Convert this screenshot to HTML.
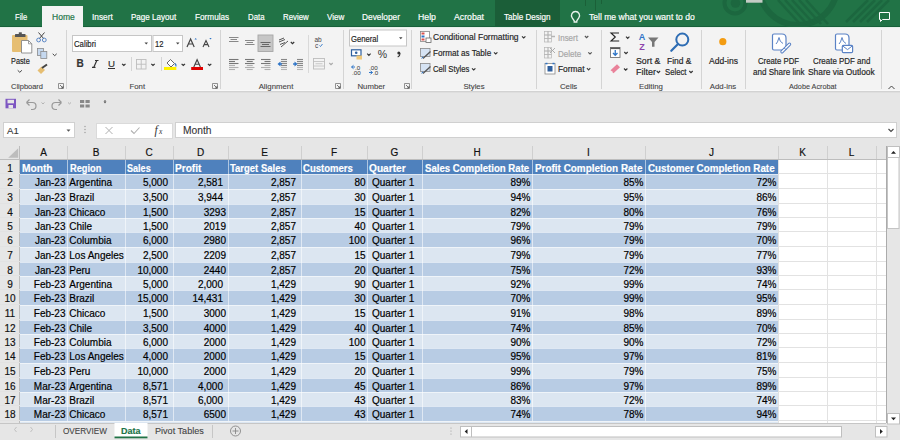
<!DOCTYPE html>
<html><head><meta charset="utf-8"><style>
html,body{margin:0;padding:0;width:900px;height:440px;overflow:hidden;background:#fff;}
body{position:relative;font-family:"Liberation Sans",sans-serif;}
div,span,svg{position:absolute;}
span{white-space:nowrap;-webkit-text-stroke:0.18px currentColor;}
</style></head><body>
<div style="left:0px;top:0px;width:900px;height:27px;background:#217346;"></div><div style="left:495px;top:0px;width:65px;height:27px;background:#1B5E38;"></div><div style="left:0px;top:26px;width:900px;height:1px;background:#17603A;"></div><div style="left:0px;top:27px;width:900px;height:1px;background:#E4F0E8;"></div><div style="left:42px;top:6px;width:41px;height:22px;background:#F3F3F3;"></div><div style="left:0px;top:28px;width:900px;height:63px;background:#F3F3F3;"></div><div style="left:0px;top:90px;width:900px;height:1px;background:#F8F8F8;"></div><div style="left:0px;top:91px;width:900px;height:1px;background:#D2D2D2;"></div><div style="left:66px;top:30px;width:1px;height:59px;background:#D4D4D4;"></div><div style="left:220px;top:30px;width:1px;height:59px;background:#D4D4D4;"></div><div style="left:343px;top:30px;width:1px;height:59px;background:#D4D4D4;"></div><div style="left:411px;top:30px;width:1px;height:59px;background:#D4D4D4;"></div><div style="left:536px;top:30px;width:1px;height:59px;background:#D4D4D4;"></div><div style="left:601px;top:30px;width:1px;height:59px;background:#D4D4D4;"></div><div style="left:701px;top:30px;width:1px;height:59px;background:#D4D4D4;"></div><div style="left:745px;top:30px;width:1px;height:59px;background:#D4D4D4;"></div><div style="left:881px;top:30px;width:1px;height:59px;background:#D4D4D4;"></div><div style="left:108px;top:68px;width:7px;height:1px;background:#333;"></div><div style="left:0px;top:92px;width:900px;height:54px;background:#E6E6E6;"></div><div style="left:0px;top:92px;width:900px;height:1px;background:#DEDEDE;"></div><div style="left:3px;top:122px;width:72px;height:16px;background:#FFFFFF;box-shadow:inset 0 0 0 1px #D0D0D0;"></div><div style="left:96px;top:122.5px;width:76.5px;height:16px;background:#FFFFFF;box-shadow:inset 0 0 0 1px #DADADA;"></div><div style="left:175px;top:122px;width:722px;height:16px;background:#FFFFFF;box-shadow:inset 0 0 0 1px #D0D0D0;"></div><div style="left:0px;top:146px;width:886px;height:14px;background:#E6E6E6;"></div><div style="left:0px;top:160px;width:886px;height:263px;background:#FFFFFF;"></div><div style="left:0px;top:160px;width:20px;height:263px;background:#E6E6E6;"></div><div style="left:19px;top:146px;width:1px;height:277px;background:#BDBDBD;"></div><div style="left:0px;top:159px;width:886px;height:1px;background:#BDBDBD;"></div><div style="left:67px;top:146px;width:1px;height:13px;background:#CFCFCF;"></div><div style="left:125px;top:146px;width:1px;height:13px;background:#CFCFCF;"></div><div style="left:173px;top:146px;width:1px;height:13px;background:#CFCFCF;"></div><div style="left:228px;top:146px;width:1px;height:13px;background:#CFCFCF;"></div><div style="left:301px;top:146px;width:1px;height:13px;background:#CFCFCF;"></div><div style="left:367px;top:146px;width:1px;height:13px;background:#CFCFCF;"></div><div style="left:422px;top:146px;width:1px;height:13px;background:#CFCFCF;"></div><div style="left:532px;top:146px;width:1px;height:13px;background:#CFCFCF;"></div><div style="left:645px;top:146px;width:1px;height:13px;background:#CFCFCF;"></div><div style="left:778px;top:146px;width:1px;height:13px;background:#CFCFCF;"></div><div style="left:827px;top:146px;width:1px;height:13px;background:#CFCFCF;"></div><div style="left:876px;top:146px;width:1px;height:13px;background:#CFCFCF;"></div><div style="left:0px;top:173px;width:886px;height:1px;background:#E2E2E2;"></div><div style="left:0px;top:188px;width:886px;height:1px;background:#E2E2E2;"></div><div style="left:0px;top:203px;width:886px;height:1px;background:#E2E2E2;"></div><div style="left:0px;top:217px;width:886px;height:1px;background:#E2E2E2;"></div><div style="left:0px;top:231px;width:886px;height:1px;background:#E2E2E2;"></div><div style="left:0px;top:246px;width:886px;height:1px;background:#E2E2E2;"></div><div style="left:0px;top:261px;width:886px;height:1px;background:#E2E2E2;"></div><div style="left:0px;top:275px;width:886px;height:1px;background:#E2E2E2;"></div><div style="left:0px;top:289px;width:886px;height:1px;background:#E2E2E2;"></div><div style="left:0px;top:304px;width:886px;height:1px;background:#E2E2E2;"></div><div style="left:0px;top:319px;width:886px;height:1px;background:#E2E2E2;"></div><div style="left:0px;top:333px;width:886px;height:1px;background:#E2E2E2;"></div><div style="left:0px;top:347px;width:886px;height:1px;background:#E2E2E2;"></div><div style="left:0px;top:362px;width:886px;height:1px;background:#E2E2E2;"></div><div style="left:0px;top:377px;width:886px;height:1px;background:#E2E2E2;"></div><div style="left:0px;top:391px;width:886px;height:1px;background:#E2E2E2;"></div><div style="left:0px;top:405px;width:886px;height:1px;background:#E2E2E2;"></div><div style="left:0px;top:420px;width:886px;height:1px;background:#E2E2E2;"></div><div style="left:0px;top:435px;width:886px;height:1px;background:#E2E2E2;"></div><div style="left:778px;top:160px;width:1px;height:263px;background:#E2E2E2;"></div><div style="left:827px;top:160px;width:1px;height:263px;background:#E2E2E2;"></div><div style="left:876px;top:160px;width:1px;height:263px;background:#E2E2E2;"></div><div style="left:886px;top:160px;width:1px;height:263px;background:#E2E2E2;"></div><div style="left:20px;top:160px;width:758px;height:14px;background:#4F81BD;"></div><div style="left:20px;top:174px;width:758px;height:15px;background:#B8CCE4;"></div><div style="left:20px;top:189px;width:758px;height:15px;background:#DCE6F1;"></div><div style="left:20px;top:204px;width:758px;height:14px;background:#B8CCE4;"></div><div style="left:20px;top:218px;width:758px;height:14px;background:#DCE6F1;"></div><div style="left:20px;top:232px;width:758px;height:15px;background:#B8CCE4;"></div><div style="left:20px;top:247px;width:758px;height:15px;background:#DCE6F1;"></div><div style="left:20px;top:262px;width:758px;height:14px;background:#B8CCE4;"></div><div style="left:20px;top:276px;width:758px;height:14px;background:#DCE6F1;"></div><div style="left:20px;top:290px;width:758px;height:15px;background:#B8CCE4;"></div><div style="left:20px;top:305px;width:758px;height:15px;background:#DCE6F1;"></div><div style="left:20px;top:320px;width:758px;height:14px;background:#B8CCE4;"></div><div style="left:20px;top:334px;width:758px;height:14px;background:#DCE6F1;"></div><div style="left:20px;top:348px;width:758px;height:15px;background:#B8CCE4;"></div><div style="left:20px;top:363px;width:758px;height:15px;background:#DCE6F1;"></div><div style="left:20px;top:378px;width:758px;height:14px;background:#B8CCE4;"></div><div style="left:20px;top:392px;width:758px;height:14px;background:#DCE6F1;"></div><div style="left:20px;top:406px;width:758px;height:15px;background:#B8CCE4;"></div><div style="left:20px;top:174px;width:758px;height:1px;background:rgba(255,255,255,0.55);"></div><div style="left:20px;top:189px;width:758px;height:1px;background:rgba(255,255,255,0.55);"></div><div style="left:20px;top:204px;width:758px;height:1px;background:rgba(255,255,255,0.55);"></div><div style="left:20px;top:218px;width:758px;height:1px;background:rgba(255,255,255,0.55);"></div><div style="left:20px;top:232px;width:758px;height:1px;background:rgba(255,255,255,0.55);"></div><div style="left:20px;top:247px;width:758px;height:1px;background:rgba(255,255,255,0.55);"></div><div style="left:20px;top:262px;width:758px;height:1px;background:rgba(255,255,255,0.55);"></div><div style="left:20px;top:276px;width:758px;height:1px;background:rgba(255,255,255,0.55);"></div><div style="left:20px;top:290px;width:758px;height:1px;background:rgba(255,255,255,0.55);"></div><div style="left:20px;top:305px;width:758px;height:1px;background:rgba(255,255,255,0.55);"></div><div style="left:20px;top:320px;width:758px;height:1px;background:rgba(255,255,255,0.55);"></div><div style="left:20px;top:334px;width:758px;height:1px;background:rgba(255,255,255,0.55);"></div><div style="left:20px;top:348px;width:758px;height:1px;background:rgba(255,255,255,0.55);"></div><div style="left:20px;top:363px;width:758px;height:1px;background:rgba(255,255,255,0.55);"></div><div style="left:20px;top:378px;width:758px;height:1px;background:rgba(255,255,255,0.55);"></div><div style="left:20px;top:392px;width:758px;height:1px;background:rgba(255,255,255,0.55);"></div><div style="left:20px;top:406px;width:758px;height:1px;background:rgba(255,255,255,0.55);"></div><div style="left:67px;top:160px;width:1px;height:261px;background:rgba(255,255,255,0.55);"></div><div style="left:125px;top:160px;width:1px;height:261px;background:rgba(255,255,255,0.55);"></div><div style="left:173px;top:160px;width:1px;height:261px;background:rgba(255,255,255,0.55);"></div><div style="left:228px;top:160px;width:1px;height:261px;background:rgba(255,255,255,0.55);"></div><div style="left:301px;top:160px;width:1px;height:261px;background:rgba(255,255,255,0.55);"></div><div style="left:367px;top:160px;width:1px;height:261px;background:rgba(255,255,255,0.55);"></div><div style="left:422px;top:160px;width:1px;height:261px;background:rgba(255,255,255,0.55);"></div><div style="left:532px;top:160px;width:1px;height:261px;background:rgba(255,255,255,0.55);"></div><div style="left:645px;top:160px;width:1px;height:261px;background:rgba(255,255,255,0.55);"></div><div style="left:20px;top:421px;width:758px;height:2px;background:#DCE6F1;"></div><div style="left:20px;top:421px;width:758px;height:1px;background:rgba(255,255,255,0.55);"></div><div style="left:886px;top:146px;width:14px;height:279px;background:#E6E6E6;"></div><div style="left:886px;top:146px;width:1px;height:278px;background:#ABABAB;"></div><div style="left:0px;top:423px;width:900px;height:17px;background:#E6E6E6;"></div><div style="left:0px;top:423px;width:886px;height:1px;background:#C6C6C6;"></div>
<svg width="900" height="440" style="left:0;top:0" viewBox="0 0 900 440"><clipPath id="gc"><rect x="0" y="0" width="900" height="27"/></clipPath><g clip-path="url(#gc)"><circle cx="735" cy="3" r="10.5" fill="none" stroke="#1C673F" stroke-width="4"/><circle cx="735.5" cy="3" r="4.8" fill="#1C673F"/><circle cx="798" cy="-14" r="39" fill="none" stroke="#1C673F" stroke-width="6"/><line x1="778" y1="0" x2="800" y2="24" stroke="#1C673F" stroke-width="2.5"/><line x1="785" y1="0" x2="807" y2="24" stroke="#1C673F" stroke-width="2.5"/><line x1="792" y1="0" x2="814" y2="24" stroke="#1C673F" stroke-width="2.5"/><line x1="799" y1="0" x2="821" y2="24" stroke="#1C673F" stroke-width="2.5"/><line x1="806" y1="0" x2="828" y2="24" stroke="#1C673F" stroke-width="2.5"/><line x1="868" y1="0" x2="846" y2="22" stroke="#1C673F" stroke-width="2.5"/><line x1="875" y1="0" x2="853" y2="22" stroke="#1C673F" stroke-width="2.5"/><line x1="882" y1="0" x2="860" y2="22" stroke="#1C673F" stroke-width="2.5"/><line x1="889" y1="0" x2="867" y2="22" stroke="#1C673F" stroke-width="2.5"/></g><rect x="746" y="0" width="16.5" height="2.7" fill="#C5CCC5"/><path d="M575.5 11.5 a4 4 0 0 1 3.3 6.3 l-2 3 v1.2 h-2.6 v-1.2 l-2 -3 a4 4 0 0 1 3.3 -6.3z" fill="none" stroke="#E8F3EC" stroke-width="1.3"/><g stroke="#1B6038" stroke-width="1"><line x1="585.5" y1="0" x2="585.5" y2="6"/><line x1="595.5" y1="0" x2="595.5" y2="11"/><line x1="601.5" y1="0" x2="601.5" y2="4"/></g><path d="M879.5 12.5 h10 v7 h-7 l-2 2 v-2 h-1 z" fill="none" stroke="#fff" stroke-width="1"/><rect x="12" y="35" width="15.5" height="17" rx="1" fill="#E6BE72"/><rect x="15" y="34" width="10.5" height="3" rx="0.5" fill="#555"/><rect x="18.8" y="32.3" width="3" height="2.5" fill="#555"/><path d="M21.5 40.5 h7 l3.3 3.3 v9.2 h-10.3 z" fill="#fff" stroke="#888" stroke-width="0.9"/><path d="M28.5 40.5 v3.3 h3.3" fill="none" stroke="#888" stroke-width="0.8"/><path d="M17.7 70.3 l2.1 2 l2.1 -2" fill="none" stroke="#444" stroke-width="1"/><line x1="38.5" y1="32.5" x2="44" y2="39" stroke="#444" stroke-width="1"/><line x1="44.5" y1="32.5" x2="39" y2="39" stroke="#444" stroke-width="1"/><circle cx="38.6" cy="40" r="1.9" fill="none" stroke="#5B87C6" stroke-width="1"/><circle cx="44.3" cy="40" r="1.9" fill="none" stroke="#5B87C6" stroke-width="1"/><rect x="37.5" y="48.5" width="6" height="7" fill="#C5D8EF" stroke="#8A8A8A" stroke-width="0.8"/><rect x="40.8" y="51.5" width="6" height="7" fill="#C5D8EF" stroke="#8A8A8A" stroke-width="0.8"/><path d="M52.7 53.8 l2 1.9 l2 -1.9" fill="none" stroke="#444" stroke-width="1"/><path d="M37.5 70.5 l4 -4 l3.5 3.5 l-4 4 z" fill="#E6BE72"/><line x1="42" y1="68" x2="47" y2="64.5" stroke="#444" stroke-width="2"/><path d="M58.5 83.5 h5 v5 h-5 z" fill="none" stroke="#777" stroke-width="0.8"/><path d="M60.0 85.0 l3 3 m-2 0 h2 v-2" fill="none" stroke="#555" stroke-width="0.8"/><path d="M212.5 83.5 h5 v5 h-5 z" fill="none" stroke="#777" stroke-width="0.8"/><path d="M214.0 85.0 l3 3 m-2 0 h2 v-2" fill="none" stroke="#555" stroke-width="0.8"/><path d="M335.5 83.5 h5 v5 h-5 z" fill="none" stroke="#777" stroke-width="0.8"/><path d="M337.0 85.0 l3 3 m-2 0 h2 v-2" fill="none" stroke="#555" stroke-width="0.8"/><path d="M404.5 83.5 h5 v5 h-5 z" fill="none" stroke="#777" stroke-width="0.8"/><path d="M406.0 85.0 l3 3 m-2 0 h2 v-2" fill="none" stroke="#555" stroke-width="0.8"/><rect x="72.5" y="35.5" width="79" height="16" fill="#fff" stroke="#C6C6C6"/><rect x="153" y="35.5" width="29.5" height="16" fill="#fff" stroke="#C6C6C6"/><path d="M144.5 42.5 h3.5 l-1.75 2 z" fill="#444"/><path d="M176 42.5 h3.5 l-1.75 2 z" fill="#444"/><path d="M187 47 l3.6 -8 l3.6 8 M188.5 44 h4.2" fill="none" stroke="#444" stroke-width="1.2"/><path d="M194.5 39.5 l1.2 -1.4 l1.2 1.4z" fill="#2E75C7"/><path d="M203 47 l3 -6.5 l3 6.5 M204.3 44.6 h3.4" fill="none" stroke="#444" stroke-width="1.1"/><path d="M209.3 38 l1.2 1.4 l1.2 -1.4z" fill="#2E75C7"/><rect x="136.5" y="59.5" width="9.5" height="9.5" fill="none" stroke="#BDBDBD" stroke-width="0.9"/><line x1="141.25" y1="59.5" x2="141.25" y2="69" stroke="#BDBDBD" stroke-width="0.9"/><line x1="136.5" y1="64.25" x2="146" y2="64.25" stroke="#BDBDBD" stroke-width="0.9"/><path d="M122.1 63.8 l1.7 1.7 l1.7 -1.7" fill="none" stroke="#333" stroke-width="1.15"/><path d="M151.3 63.8 l1.7 1.7 l1.7 -1.7" fill="none" stroke="#333" stroke-width="1.15"/><path d="M181.60000000000002 63.8 l1.7 1.7 l1.7 -1.7" fill="none" stroke="#333" stroke-width="1.15"/><path d="M207.9 63.8 l1.7 1.7 l1.7 -1.7" fill="none" stroke="#333" stroke-width="1.15"/><line x1="131.5" y1="57" x2="131.5" y2="71" stroke="#D4D4D4"/><line x1="161.5" y1="57" x2="161.5" y2="71" stroke="#D4D4D4"/><path d="M170.5 59.5 l4 4 l-3.5 3.5 l-4 -4 z" fill="#fff" stroke="#555" stroke-width="0.9"/><path d="M175 63.5 q1.5 1.5 0.8 3" fill="none" stroke="#2E75C7" stroke-width="1.2"/><rect x="164" y="67" width="12.3" height="3" fill="#FFF200"/><path d="M193.8 67 l3.3 -7.3 l3.3 7.3 M195.1 64.3 h4" fill="none" stroke="#444" stroke-width="1.1"/><rect x="191.2" y="67" width="11.8" height="3" fill="#E00000"/><path d="M95 60.5 h3.5 M92 67.3 h3.5 M96.8 60.5 l-3 6.8" fill="none" stroke="#333" stroke-width="1.2"/><line x1="229" y1="37.5" x2="238.5" y2="37.5" stroke="#888" stroke-width="1"/><line x1="230.5" y1="39.5" x2="237.0" y2="39.5" stroke="#888" stroke-width="1"/><line x1="229" y1="41.5" x2="238.5" y2="41.5" stroke="#888" stroke-width="1"/><line x1="245" y1="40.5" x2="254.5" y2="40.5" stroke="#888" stroke-width="1"/><line x1="246.5" y1="42.5" x2="253.0" y2="42.5" stroke="#888" stroke-width="1"/><line x1="245" y1="44.5" x2="254.5" y2="44.5" stroke="#888" stroke-width="1"/><rect x="258" y="35" width="15" height="16.5" fill="#C6C6C6" stroke="#A6A6A6" stroke-width="0.9"/><line x1="260.5" y1="42.5" x2="270.5" y2="42.5" stroke="#666" stroke-width="1"/><line x1="262" y1="44.5" x2="269" y2="44.5" stroke="#666" stroke-width="1"/><line x1="260.5" y1="46.5" x2="270.5" y2="46.5" stroke="#666" stroke-width="1"/><path d="M279 40 l5 -2 m-5 4 l6 -2.5 m-5 5 l5 -2" fill="none" stroke="#555" stroke-width="1"/><line x1="281" y1="47" x2="288" y2="41" stroke="#555" stroke-width="1"/><path d="M290.8 42 l1.7 1.7 l1.7 -1.7" fill="none" stroke="#333" stroke-width="1.15"/><line x1="229" y1="59.5" x2="238.5" y2="59.5" stroke="#777" stroke-width="1.1"/><line x1="229" y1="61.5" x2="235" y2="61.5" stroke="#777" stroke-width="1.1"/><line x1="229" y1="63.5" x2="238.5" y2="63.5" stroke="#777" stroke-width="1.1"/><line x1="229" y1="65.5" x2="235" y2="65.5" stroke="#B0B0B0" stroke-width="1.1"/><line x1="229" y1="67.5" x2="238.5" y2="67.5" stroke="#B0B0B0" stroke-width="1.1"/><line x1="229" y1="69.5" x2="235" y2="69.5" stroke="#B0B0B0" stroke-width="1.1"/><line x1="245.0" y1="59.5" x2="254.5" y2="59.5" stroke="#777" stroke-width="1.1"/><line x1="246.75" y1="61.5" x2="252.75" y2="61.5" stroke="#777" stroke-width="1.1"/><line x1="245.0" y1="63.5" x2="254.5" y2="63.5" stroke="#777" stroke-width="1.1"/><line x1="246.75" y1="65.5" x2="252.75" y2="65.5" stroke="#B0B0B0" stroke-width="1.1"/><line x1="245.0" y1="67.5" x2="254.5" y2="67.5" stroke="#B0B0B0" stroke-width="1.1"/><line x1="246.75" y1="69.5" x2="252.75" y2="69.5" stroke="#B0B0B0" stroke-width="1.1"/><line x1="261.0" y1="59.5" x2="270.5" y2="59.5" stroke="#777" stroke-width="1.1"/><line x1="264.5" y1="61.5" x2="270.5" y2="61.5" stroke="#777" stroke-width="1.1"/><line x1="261.0" y1="63.5" x2="270.5" y2="63.5" stroke="#777" stroke-width="1.1"/><line x1="264.5" y1="65.5" x2="270.5" y2="65.5" stroke="#B0B0B0" stroke-width="1.1"/><line x1="261.0" y1="67.5" x2="270.5" y2="67.5" stroke="#B0B0B0" stroke-width="1.1"/><line x1="264.5" y1="69.5" x2="270.5" y2="69.5" stroke="#B0B0B0" stroke-width="1.1"/><line x1="281" y1="59.5" x2="287" y2="59.5" stroke="#888" stroke-width="1.1"/><line x1="281" y1="61.5" x2="287" y2="61.5" stroke="#888" stroke-width="1.1"/><line x1="281" y1="63.5" x2="287" y2="63.5" stroke="#888" stroke-width="1.1"/><line x1="281" y1="65.5" x2="287" y2="65.5" stroke="#888" stroke-width="1.1"/><line x1="281" y1="67.5" x2="287" y2="67.5" stroke="#B5B5B5" stroke-width="1.1"/><line x1="281" y1="69.5" x2="287" y2="69.5" stroke="#B5B5B5" stroke-width="1.1"/><line x1="297" y1="59.5" x2="303" y2="59.5" stroke="#888" stroke-width="1.1"/><line x1="297" y1="61.5" x2="303" y2="61.5" stroke="#888" stroke-width="1.1"/><line x1="297" y1="63.5" x2="303" y2="63.5" stroke="#888" stroke-width="1.1"/><line x1="297" y1="65.5" x2="303" y2="65.5" stroke="#888" stroke-width="1.1"/><line x1="297" y1="67.5" x2="303" y2="67.5" stroke="#B5B5B5" stroke-width="1.1"/><line x1="297" y1="69.5" x2="303" y2="69.5" stroke="#B5B5B5" stroke-width="1.1"/><path d="M277.5 64 l3 -2.5 v5 z" fill="#2E75C7"/><line x1="279" y1="64" x2="282" y2="64" stroke="#2E75C7" stroke-width="1.4"/><path d="M297.5 64 l-3 -2.5 v5 z" fill="#2E75C7"/><line x1="293" y1="64" x2="296" y2="64" stroke="#2E75C7" stroke-width="1.4"/><line x1="308.5" y1="35" x2="308.5" y2="73" stroke="#D9D9D9"/><text x="314.5" y="41.5" font-size="6.5" fill="#444" font-family="Liberation Sans">ab</text><text x="315" y="47.5" font-size="6.5" fill="#444" font-family="Liberation Sans">c</text><path d="M319.5 45.5 l1 1 l2 -2.5" fill="none" stroke="#2E75C7" stroke-width="0.9"/><rect x="313.5" y="58.5" width="11" height="10.5" fill="none" stroke="#BDBDBD" stroke-width="0.9"/><line x1="313.5" y1="61.5" x2="324.5" y2="61.5" stroke="#BDBDBD" stroke-width="0.8"/><line x1="313.5" y1="66" x2="324.5" y2="66" stroke="#BDBDBD" stroke-width="0.8"/><line x1="315.5" y1="63.75" x2="322.5" y2="63.75" stroke="#BDBDBD" stroke-width="0.8"/><path d="M329.3 63 l1.7 1.7 l1.7 -1.7" fill="none" stroke="#AAA" stroke-width="1.15"/><rect x="349.5" y="30" width="57" height="16" fill="#fff" stroke="#C6C6C6"/><path d="M399 37.3 h3.5 l-1.75 2 z" fill="#444"/><rect x="351.5" y="49.8" width="9.5" height="6" fill="#fff" stroke="#2E5F9E" stroke-width="1.2"/><circle cx="356.2" cy="52.8" r="1.3" fill="#2E5F9E"/><rect x="356.5" y="55.5" width="5.5" height="4" fill="#F0C878"/><path d="M367.2 53.7 l1.7 1.7 l1.7 -1.7" fill="none" stroke="#333" stroke-width="1.15"/><text x="377.8" y="58.3" font-size="10.5" fill="#333" font-family="Liberation Sans">%</text><circle cx="398.8" cy="53" r="1.5" fill="#333"/><path d="M400.1 53.3 q0 2.6 -2.4 3.8" fill="none" stroke="#333" stroke-width="1.1"/><text x="355" y="69.5" font-size="6.2" fill="#333" font-family="Liberation Sans">.0</text><text x="352" y="75" font-size="6.2" fill="#333" font-family="Liberation Sans">.00</text><path d="M353.5 65.3 l-2 1.7 l2 1.7 M351.7 67 h3.3" fill="none" stroke="#2E75C7" stroke-width="1"/><text x="369" y="69.5" font-size="6.2" fill="#333" font-family="Liberation Sans">.00</text><text x="373" y="75" font-size="6.2" fill="#333" font-family="Liberation Sans">.0</text><path d="M370.5 70.8 l2 1.7 l-2 1.7 M369 72.5 h3.3" fill="none" stroke="#2E75C7" stroke-width="1"/><rect x="420.5" y="31.5" width="9" height="10" fill="#fff" stroke="#888" stroke-width="0.8"/><rect x="421.5" y="32.5" width="3" height="2" fill="#D9534F"/><rect x="421.5" y="35.5" width="3" height="2" fill="#2E75C7"/><rect x="421.5" y="38.5" width="3" height="2" fill="#D9534F"/><rect x="426" y="38" width="5" height="4.5" fill="#fff" stroke="#666" stroke-width="0.8"/><rect x="420.5" y="48.5" width="9.5" height="8" fill="#D6E3F3" stroke="#888" stroke-width="0.8"/><line x1="423" y1="58.5" x2="430.5" y2="51.5" stroke="#555" stroke-width="1.3"/><path d="M421 59.0 l2.5 -1.5 l-1 -1z" fill="#2E75C7"/><rect x="420.5" y="63.5" width="9.5" height="8" fill="#D6E3F3" stroke="#888" stroke-width="0.8"/><line x1="423" y1="73.5" x2="430.5" y2="66.5" stroke="#555" stroke-width="1.3"/><path d="M421 74.0 l2.5 -1.5 l-1 -1z" fill="#2E75C7"/><path d="M522.0 36.3 l1.7 1.7 l1.7 -1.7" fill="none" stroke="#333" stroke-width="1.15"/><path d="M494.0 52.3 l1.7 1.7 l1.7 -1.7" fill="none" stroke="#333" stroke-width="1.15"/><path d="M472.0 68.3 l1.7 1.7 l1.7 -1.7" fill="none" stroke="#333" stroke-width="1.15"/><rect x="544.5" y="31.5" width="3.5" height="3.5" fill="none" stroke="#B5B5B5" stroke-width="0.7"/><rect x="548.0" y="31.5" width="3.5" height="3.5" fill="none" stroke="#B5B5B5" stroke-width="0.7"/><rect x="544.5" y="35.0" width="3.5" height="3.5" fill="none" stroke="#B5B5B5" stroke-width="0.7"/><rect x="548.0" y="35.0" width="3.5" height="3.5" fill="none" stroke="#B5B5B5" stroke-width="0.7"/><rect x="544.5" y="38.5" width="3.5" height="3.5" fill="none" stroke="#B5B5B5" stroke-width="0.7"/><rect x="548.0" y="38.5" width="3.5" height="3.5" fill="none" stroke="#B5B5B5" stroke-width="0.7"/><line x1="551" y1="36.5" x2="555" y2="36.5" stroke="#B5B5B5" stroke-width="1.5"/><rect x="544.5" y="47.5" width="3.5" height="3.5" fill="none" stroke="#B5B5B5" stroke-width="0.7"/><rect x="548.0" y="47.5" width="3.5" height="3.5" fill="none" stroke="#B5B5B5" stroke-width="0.7"/><rect x="544.5" y="51.0" width="3.5" height="3.5" fill="none" stroke="#B5B5B5" stroke-width="0.7"/><rect x="548.0" y="51.0" width="3.5" height="3.5" fill="none" stroke="#B5B5B5" stroke-width="0.7"/><rect x="544.5" y="54.5" width="3.5" height="3.5" fill="none" stroke="#B5B5B5" stroke-width="0.7"/><rect x="548.0" y="54.5" width="3.5" height="3.5" fill="none" stroke="#B5B5B5" stroke-width="0.7"/><path d="M550 48 l5 5 m0 -5 l-5 5" stroke="#A5A5A5" stroke-width="0.9"/><rect x="545" y="63.5" width="10" height="10.5" fill="#fff" stroke="#888" stroke-width="0.8"/><rect x="547.5" y="66" width="5" height="5.5" fill="#2E5F9E"/><rect x="545.5" y="62.8" width="2" height="1.5" fill="#2E75C7"/><rect x="552.5" y="62.8" width="2" height="1.5" fill="#2E75C7"/><path d="M584.9 36 l1.7 1.7 l1.7 -1.7" fill="none" stroke="#555" stroke-width="1.15"/><path d="M588.3 52.3 l1.7 1.7 l1.7 -1.7" fill="none" stroke="#555" stroke-width="1.15"/><path d="M586.9 68.2 l1.7 1.7 l1.7 -1.7" fill="none" stroke="#444" stroke-width="1.15"/><path d="M619 33 h-8 l4.3 4 l-4.3 4 h8.2" fill="none" stroke="#222" stroke-width="1.1"/><path d="M626.0 36.7 l1.7 1.7 l1.7 -1.7" fill="none" stroke="#333" stroke-width="1.15"/><rect x="610.5" y="47.5" width="9.5" height="10" fill="#fff" stroke="#777" stroke-width="0.9"/><rect x="610.5" y="47.5" width="9.5" height="1.6" fill="#555"/><path d="M615.25 50 v5 M613 53 l2.25 2.3 l2.25 -2.3" fill="none" stroke="#2E75C7" stroke-width="1.3"/><path d="M624.3 52 l1.7 1.7 l1.7 -1.7" fill="none" stroke="#333" stroke-width="1.15"/><path d="M610.5 70.2 l6.5 -6 l3 3 l-6.5 6 z" fill="#E9829A"/><path d="M612.2 71.8 l-1 -1" stroke="#fff" stroke-width="0.9"/><path d="M624.0 68.5 l1.7 1.7 l1.7 -1.7" fill="none" stroke="#333" stroke-width="1.15"/><text x="638.8" y="39.6" font-size="9" font-weight="bold" fill="#2E75C7" font-family="Liberation Sans">A</text><text x="639.2" y="50.4" font-size="9" font-weight="bold" fill="#8E44AD" font-family="Liberation Sans">Z</text><path d="M648 37.5 h10.5 l-4 4.5 v4.8 h-2.5 v-4.8 z" fill="#777"/><circle cx="682.3" cy="39.6" r="6" fill="none" stroke="#2E6DB4" stroke-width="2"/><line x1="678" y1="44" x2="671.3" y2="50.8" stroke="#2E6DB4" stroke-width="2.2" stroke-linecap="round"/><path d="M656.6999999999999 71 l1.7 1.7 l1.7 -1.7" fill="none" stroke="#333" stroke-width="1.15"/><path d="M689.3 71 l1.7 1.7 l1.7 -1.7" fill="none" stroke="#333" stroke-width="1.15"/><circle cx="722.8" cy="41.7" r="3.6" fill="#F39C12"/><path d="M774.0 34 h8 q4 0 4 4 v10.5 q0 1.5 -1.5 1.5 h-10.5 q-1.5 0 -1.5 -1.5 v-13 q0 -1.5 1.5 -1.5 z" fill="#fff" stroke="#5A82C5" stroke-width="1.2"/><path d="M776.0 44 q1.5 -1 3 -6.5 q0.6 4.5 4 6" fill="none" stroke="#5A82C5" stroke-width="1"/><path d="M837.0 34 h8 q4 0 4 4 v10.5 q0 1.5 -1.5 1.5 h-10.5 q-1.5 0 -1.5 -1.5 v-13 q0 -1.5 1.5 -1.5 z" fill="#fff" stroke="#5A82C5" stroke-width="1.2"/><path d="M839.0 44 q1.5 -1 3 -6.5 q0.6 4.5 4 6" fill="none" stroke="#5A82C5" stroke-width="1"/><path d="M782 51.8 l7.5 -7.5" stroke="#5A82C5" stroke-width="3.4" stroke-linecap="round" fill="none"/><path d="M782 51.8 l7.5 -7.5" stroke="#fff" stroke-width="1.4" stroke-linecap="round" fill="none"/><path d="M784.3 48 l1.6 1.6" stroke="#5A82C5" stroke-width="1" fill="none"/><rect x="842.3" y="45.3" width="10.3" height="7.4" rx="1.2" fill="#fff" stroke="#5A82C5" stroke-width="1.2"/><path d="M842.8 46 l4.7 3.6 l4.7 -3.6" fill="none" stroke="#5A82C5" stroke-width="1"/><path d="M888.5 89 l3 -3 l3 3" fill="none" stroke="#444" stroke-width="1"/><rect x="5.5" y="98.8" width="10.5" height="9.5" fill="#7E57C2"/><rect x="7.5" y="99.8" width="6.5" height="3.5" fill="#E6E6E6"/><rect x="8.5" y="105" width="4.5" height="3.3" fill="#E6E6E6"/><path d="M26.5 102.5 l3 -3 m-3 3 l3 3 m-3 -3 h6 a3.5 3.5 0 0 1 0 7 h-1.5" fill="none" stroke="#999" stroke-width="1.2"/><path d="M61.5 102.5 l-3 -3 m3 3 l-3 3 m3 -3 h-6 a3.5 3.5 0 0 0 0 7 h1.5" fill="none" stroke="#999" stroke-width="1.2"/><path d="M41.5 102.5 l1.5 1.4 l1.5 -1.4 M68 102.5 l1.5 1.4 l1.5 -1.4" fill="none" stroke="#AAA" stroke-width="0.9"/><g fill="#888"><rect x="80" y="100" width="4.2" height="3"/><rect x="85.5" y="100" width="4.2" height="3"/><rect x="80" y="104.5" width="4.2" height="3"/><rect x="85.5" y="104.5" width="4.2" height="3"/></g><path d="M103.5 101.5 h3 l-1.5 2 z" fill="#555"/><rect x="104" y="100.5" width="2" height="0.8" fill="#555"/><path d="M71 129.5 h4 l-2 2.2z" fill="#555" transform="translate(-4.5 0)"/><g fill="#999"><circle cx="85" cy="126.5" r="0.7"/><circle cx="85" cy="129.5" r="0.7"/><circle cx="85" cy="132.5" r="0.7"/></g><path d="M105.5 127 l7 7 m0 -7 l-7 7" stroke="#B0B0B0" stroke-width="1" fill="none"/><path d="M131 130.5 l3 3 l5.5 -6" stroke="#B0B0B0" stroke-width="1.1" fill="none"/><text x="154.5" y="133.6" font-size="11.5" font-style="italic" fill="#333" font-family="Liberation Serif">f</text><text x="159" y="134" font-size="7.5" font-style="italic" fill="#333" font-family="Liberation Serif">x</text><path d="M888.5 129 l2.5 2.5 l2.5 -2.5" stroke="#444" stroke-width="1.1" fill="none"/><path d="M18.2 148.3 v9.5 h-10 z" fill="#BDBDBD"/><rect x="887.5" y="146.5" width="12" height="11" fill="#fff" stroke="#BFBFBF"/><path d="M891 153.8 h5 l-2.5 -2.8z" fill="#222"/><rect x="887.5" y="157.5" width="11.5" height="71" fill="#fff" stroke="#C4C4C4"/><rect x="887.5" y="413.5" width="12" height="10.5" fill="#fff" stroke="#BFBFBF"/><path d="M891 417.5 h5 l-2.5 2.8z" fill="#222"/><path d="M16.5 427 l-2 2.5 l2 2.5" fill="none" stroke="#BBB" stroke-width="0.9"/><path d="M30.5 427 l2 2.5 l-2 2.5" fill="none" stroke="#BBB" stroke-width="0.9"/><line x1="55.5" y1="425" x2="55.5" y2="438" stroke="#C6C6C6"/><line x1="212.5" y1="425" x2="212.5" y2="438" stroke="#C6C6C6"/><rect x="114.5" y="423" width="33" height="15" fill="#fff"/><rect x="114.5" y="436.5" width="33" height="1.8" fill="#217346"/><circle cx="235.5" cy="431" r="5" fill="none" stroke="#888" stroke-width="0.9"/><path d="M232.5 431 h6 M235.5 428 v6" stroke="#888" stroke-width="0.9"/><g fill="#999"><circle cx="451" cy="428" r="0.6"/><circle cx="451" cy="431" r="0.6"/><circle cx="451" cy="434" r="0.6"/></g><rect x="460.5" y="426.5" width="381" height="10.5" fill="#fff" stroke="#BFBFBF"/><line x1="471.5" y1="426.5" x2="471.5" y2="437" stroke="#BFBFBF"/><path d="M467.5 429 v5 l-2.8 -2.5z" fill="#222"/><rect x="875.5" y="426.5" width="11.5" height="10.5" fill="#fff" stroke="#BFBFBF"/><path d="M880 429 v5 l2.8 -2.5z" fill="#222"/></svg>
<span style="left:14.80px;top:13.06px;font-size:9px;line-height:9px;font-weight:normal;color:#FFFFFF;transform:scaleX(0.8413);transform-origin:0 0;">File</span><span style="left:51.70px;top:13.06px;font-size:9px;line-height:9px;font-weight:normal;color:#217346;transform:scaleX(0.9455);transform-origin:0 0;">Home</span><span style="left:92.30px;top:13.06px;font-size:9px;line-height:9px;font-weight:normal;color:#FFFFFF;transform:scaleX(0.9196);transform-origin:0 0;">Insert</span><span style="left:131.40px;top:13.06px;font-size:9px;line-height:9px;font-weight:normal;color:#FFFFFF;transform:scaleX(0.8943);transform-origin:0 0;">Page Layout</span><span style="left:194.50px;top:13.06px;font-size:9px;line-height:9px;font-weight:normal;color:#FFFFFF;transform:scaleX(0.9118);transform-origin:0 0;">Formulas</span><span style="left:247.50px;top:13.06px;font-size:9px;line-height:9px;font-weight:normal;color:#FFFFFF;transform:scaleX(0.8679);transform-origin:0 0;">Data</span><span style="left:282.70px;top:13.06px;font-size:9px;line-height:9px;font-weight:normal;color:#FFFFFF;transform:scaleX(0.8709);transform-origin:0 0;">Review</span><span style="left:326.70px;top:13.06px;font-size:9px;line-height:9px;font-weight:normal;color:#FFFFFF;transform:scaleX(0.8943);transform-origin:0 0;">View</span><span style="left:362.40px;top:13.06px;font-size:9px;line-height:9px;font-weight:normal;color:#FFFFFF;transform:scaleX(0.9239);transform-origin:0 0;">Developer</span><span style="left:418.40px;top:13.06px;font-size:9px;line-height:9px;font-weight:normal;color:#FFFFFF;transform:scaleX(0.9671);transform-origin:0 0;">Help</span><span style="left:453.90px;top:13.06px;font-size:9px;line-height:9px;font-weight:normal;color:#FFFFFF;transform:scaleX(0.9672);transform-origin:0 0;">Acrobat</span><span style="left:503.70px;top:13.06px;font-size:9px;line-height:9px;font-weight:normal;color:#FFFFFF;transform:scaleX(0.8937);transform-origin:0 0;">Table Design</span><span style="left:589.30px;top:13.06px;font-size:9px;line-height:9px;font-weight:normal;color:#FFFFFF;transform:scaleX(0.9517);transform-origin:0 0;">Tell me what you want to do</span><span style="left:11.00px;top:82.64px;font-size:7.8px;line-height:7.8px;font-weight:normal;color:#444;transform:scaleX(0.9589);transform-origin:0 0;-webkit-text-stroke:0.1px #444;">Clipboard</span><span style="left:129.50px;top:82.64px;font-size:7.8px;line-height:7.8px;font-weight:normal;color:#444;-webkit-text-stroke:0.1px #444;">Font</span><span style="left:258.66px;top:82.64px;font-size:7.8px;line-height:7.8px;font-weight:normal;color:#444;-webkit-text-stroke:0.1px #444;">Alignment</span><span style="left:357.43px;top:82.64px;font-size:7.8px;line-height:7.8px;font-weight:normal;color:#444;-webkit-text-stroke:0.1px #444;">Number</span><span style="left:463.38px;top:82.64px;font-size:7.8px;line-height:7.8px;font-weight:normal;color:#444;-webkit-text-stroke:0.1px #444;">Styles</span><span style="left:559.94px;top:82.64px;font-size:7.8px;line-height:7.8px;font-weight:normal;color:#444;-webkit-text-stroke:0.1px #444;">Cells</span><span style="left:639.08px;top:82.64px;font-size:7.8px;line-height:7.8px;font-weight:normal;color:#444;-webkit-text-stroke:0.1px #444;">Editing</span><span style="left:709.78px;top:82.64px;font-size:7.8px;line-height:7.8px;font-weight:normal;color:#444;-webkit-text-stroke:0.1px #444;">Add-ins</span><span style="left:789.00px;top:82.64px;font-size:7.8px;line-height:7.8px;font-weight:normal;color:#444;transform:scaleX(0.9306);transform-origin:0 0;-webkit-text-stroke:0.1px #444;">Adobe Acrobat</span><span style="left:10.70px;top:56.80px;font-size:8.5px;line-height:8.5px;font-weight:normal;color:#262626;transform:scaleX(0.8603);transform-origin:0 0;">Paste</span><span style="left:74.00px;top:39.76px;font-size:8.8px;line-height:8.8px;font-weight:normal;color:#262626;transform:scaleX(0.8825);transform-origin:0 0;">Calibri</span><span style="left:154.80px;top:39.96px;font-size:8.8px;line-height:8.8px;font-weight:normal;color:#262626;transform:scaleX(0.8687);transform-origin:0 0;">12</span><span style="left:350.70px;top:35.10px;font-size:8.5px;line-height:8.5px;font-weight:normal;color:#262626;transform:scaleX(0.9028);transform-origin:0 0;">General</span><span style="left:432.70px;top:32.86px;font-size:8.8px;line-height:8.8px;font-weight:normal;color:#262626;transform:scaleX(0.9672);transform-origin:0 0;">Conditional Formatting</span><span style="left:432.70px;top:48.86px;font-size:8.8px;line-height:8.8px;font-weight:normal;color:#262626;transform:scaleX(0.9244);transform-origin:0 0;">Format as Table</span><span style="left:432.70px;top:64.86px;font-size:8.8px;line-height:8.8px;font-weight:normal;color:#262626;transform:scaleX(0.8736);transform-origin:0 0;">Cell Styles</span><span style="left:557.60px;top:33.86px;font-size:8.8px;line-height:8.8px;font-weight:normal;color:#A6A6A6;transform:scaleX(0.9045);transform-origin:0 0;">Insert</span><span style="left:557.60px;top:49.56px;font-size:8.8px;line-height:8.8px;font-weight:normal;color:#A6A6A6;transform:scaleX(0.9084);transform-origin:0 0;">Delete</span><span style="left:557.60px;top:65.46px;font-size:8.8px;line-height:8.8px;font-weight:normal;color:#262626;transform:scaleX(0.9512);transform-origin:0 0;">Format</span><span style="left:636.25px;top:57.26px;font-size:8.8px;line-height:8.8px;font-weight:normal;color:#262626;transform:scaleX(0.9982);transform-origin:0 0;">Sort &amp;</span><span style="left:635.70px;top:68.26px;font-size:8.8px;line-height:8.8px;font-weight:normal;color:#262626;transform:scaleX(1.0180);transform-origin:0 0;">Filter</span><span style="left:667.00px;top:57.26px;font-size:8.8px;line-height:8.8px;font-weight:normal;color:#262626;transform:scaleX(0.9597);transform-origin:0 0;">Find &amp;</span><span style="left:664.70px;top:68.26px;font-size:8.8px;line-height:8.8px;font-weight:normal;color:#262626;transform:scaleX(0.8794);transform-origin:0 0;">Select</span><span style="left:708.50px;top:57.26px;font-size:8.8px;line-height:8.8px;font-weight:normal;color:#262626;transform:scaleX(0.9723);transform-origin:0 0;">Add-ins</span><span style="left:757.50px;top:57.16px;font-size:8.8px;line-height:8.8px;font-weight:normal;color:#262626;transform:scaleX(0.8828);transform-origin:0 0;">Create PDF</span><span style="left:752.65px;top:68.46px;font-size:8.8px;line-height:8.8px;font-weight:normal;color:#262626;transform:scaleX(0.9157);transform-origin:0 0;">and Share link</span><span style="left:812.55px;top:57.16px;font-size:8.8px;line-height:8.8px;font-weight:normal;color:#262626;transform:scaleX(0.9015);transform-origin:0 0;">Create PDF and</span><span style="left:807.85px;top:68.46px;font-size:8.8px;line-height:8.8px;font-weight:normal;color:#262626;transform:scaleX(0.9539);transform-origin:0 0;">Share via Outlook</span><span style="left:76.60px;top:58.88px;font-size:10px;line-height:10px;font-weight:bold;color:#333;">B</span><span style="left:108.00px;top:58.98px;font-size:9.8px;line-height:9.8px;font-weight:normal;color:#333;transform:scaleX(0.9894);transform-origin:0 0;">U</span><span style="left:62.70px;top:426.76px;font-size:8.8px;line-height:8.8px;font-weight:normal;color:#444;transform:scaleX(0.9312);transform-origin:0 0;-webkit-text-stroke:0.1px #444;">OVERVIEW</span><span style="left:121.05px;top:426.76px;font-size:8.8px;line-height:8.8px;font-weight:bold;color:#217346;transform:scaleX(1.0227);transform-origin:0 0;">Data</span><span style="left:155.00px;top:426.76px;font-size:8.8px;line-height:8.8px;font-weight:normal;color:#444;transform:scaleX(1.0331);transform-origin:0 0;-webkit-text-stroke:0.1px #444;">Pivot Tables</span><span style="left:7.00px;top:126.37px;font-size:9.6px;line-height:9.6px;font-weight:normal;color:#333;-webkit-text-stroke:0.1px #333;">A1</span><span style="left:183.30px;top:125.88px;font-size:10px;line-height:10px;font-weight:normal;color:#333;transform:scaleX(1.0254);transform-origin:0 0;-webkit-text-stroke:0.1px #333;">Month</span><span style="left:40.17px;top:148.38px;font-size:10px;line-height:10px;font-weight:normal;color:#111;">A</span><span style="left:92.67px;top:148.38px;font-size:10px;line-height:10px;font-weight:normal;color:#111;">B</span><span style="left:145.39px;top:148.38px;font-size:10px;line-height:10px;font-weight:normal;color:#111;">C</span><span style="left:196.89px;top:148.38px;font-size:10px;line-height:10px;font-weight:normal;color:#111;">D</span><span style="left:261.17px;top:148.38px;font-size:10px;line-height:10px;font-weight:normal;color:#111;">E</span><span style="left:330.95px;top:148.38px;font-size:10px;line-height:10px;font-weight:normal;color:#111;">F</span><span style="left:390.61px;top:148.38px;font-size:10px;line-height:10px;font-weight:normal;color:#111;">G</span><span style="left:473.39px;top:148.38px;font-size:10px;line-height:10px;font-weight:normal;color:#111;">H</span><span style="left:587.11px;top:148.38px;font-size:10px;line-height:10px;font-weight:normal;color:#111;">I</span><span style="left:709.00px;top:148.38px;font-size:10px;line-height:10px;font-weight:normal;color:#111;">J</span><span style="left:799.17px;top:148.38px;font-size:10px;line-height:10px;font-weight:normal;color:#111;">K</span><span style="left:848.72px;top:148.38px;font-size:10px;line-height:10px;font-weight:normal;color:#111;">L</span><span style="left:7.22px;top:163.68px;font-size:10px;line-height:10px;font-weight:normal;color:#111;">1</span><span style="left:22.40px;top:164.08px;font-size:10px;line-height:10px;font-weight:bold;color:#FFFFFF;transform:scaleX(1.0205);transform-origin:0 0;">Month</span><span style="left:70.10px;top:164.08px;font-size:10px;line-height:10px;font-weight:bold;color:#FFFFFF;transform:scaleX(0.9237);transform-origin:0 0;">Region</span><span style="left:127.10px;top:164.08px;font-size:10px;line-height:10px;font-weight:bold;color:#FFFFFF;transform:scaleX(0.9069);transform-origin:0 0;">Sales</span><span style="left:174.50px;top:164.08px;font-size:10px;line-height:10px;font-weight:bold;color:#FFFFFF;transform:scaleX(1.0112);transform-origin:0 0;">Profit</span><span style="left:230.40px;top:164.08px;font-size:10px;line-height:10px;font-weight:bold;color:#FFFFFF;transform:scaleX(0.9484);transform-origin:0 0;">Target Sales</span><span style="left:302.80px;top:164.08px;font-size:10px;line-height:10px;font-weight:bold;color:#FFFFFF;transform:scaleX(0.9534);transform-origin:0 0;">Customers</span><span style="left:369.30px;top:164.08px;font-size:10px;line-height:10px;font-weight:bold;color:#FFFFFF;transform:scaleX(1.0132);transform-origin:0 0;">Quarter</span><span style="left:424.70px;top:164.08px;font-size:10px;line-height:10px;font-weight:bold;color:#FFFFFF;transform:scaleX(0.9616);transform-origin:0 0;">Sales Completion Rate</span><span style="left:535.10px;top:164.08px;font-size:10px;line-height:10px;font-weight:bold;color:#FFFFFF;transform:scaleX(0.9914);transform-origin:0 0;">Profit Completion Rate</span><span style="left:648.00px;top:164.08px;font-size:10px;line-height:10px;font-weight:bold;color:#FFFFFF;transform:scaleX(0.9821);transform-origin:0 0;">Customer Completion Rate</span><span style="left:7.22px;top:177.68px;font-size:10px;line-height:10px;font-weight:normal;color:#111;">2</span><span style="left:34.92px;top:178.38px;font-size:10px;line-height:10px;font-weight:normal;color:#000;">Jan-23</span><span style="left:69.30px;top:178.38px;font-size:10px;line-height:10px;font-weight:normal;color:#000;">Argentina</span><span style="left:142.98px;top:178.38px;font-size:10px;line-height:10px;font-weight:normal;color:#000;">5,000</span><span style="left:197.98px;top:178.38px;font-size:10px;line-height:10px;font-weight:normal;color:#000;">2,581</span><span style="left:270.98px;top:178.38px;font-size:10px;line-height:10px;font-weight:normal;color:#000;">2,857</span><span style="left:354.38px;top:178.38px;font-size:10px;line-height:10px;font-weight:normal;color:#000;">80</span><span style="left:372.00px;top:178.38px;font-size:10px;line-height:10px;font-weight:normal;color:#000;">Quarter 1</span><span style="left:510.49px;top:178.38px;font-size:10px;line-height:10px;font-weight:normal;color:#000;">89%</span><span style="left:623.49px;top:178.38px;font-size:10px;line-height:10px;font-weight:normal;color:#000;">85%</span><span style="left:756.49px;top:178.38px;font-size:10px;line-height:10px;font-weight:normal;color:#000;">72%</span><span style="left:7.22px;top:192.68px;font-size:10px;line-height:10px;font-weight:normal;color:#111;">3</span><span style="left:34.92px;top:193.38px;font-size:10px;line-height:10px;font-weight:normal;color:#000;">Jan-23</span><span style="left:69.30px;top:193.38px;font-size:10px;line-height:10px;font-weight:normal;color:#000;">Brazil</span><span style="left:142.98px;top:193.38px;font-size:10px;line-height:10px;font-weight:normal;color:#000;">3,500</span><span style="left:197.98px;top:193.38px;font-size:10px;line-height:10px;font-weight:normal;color:#000;">3,944</span><span style="left:270.98px;top:193.38px;font-size:10px;line-height:10px;font-weight:normal;color:#000;">2,857</span><span style="left:354.38px;top:193.38px;font-size:10px;line-height:10px;font-weight:normal;color:#000;">30</span><span style="left:372.00px;top:193.38px;font-size:10px;line-height:10px;font-weight:normal;color:#000;">Quarter 1</span><span style="left:510.49px;top:193.38px;font-size:10px;line-height:10px;font-weight:normal;color:#000;">94%</span><span style="left:623.49px;top:193.38px;font-size:10px;line-height:10px;font-weight:normal;color:#000;">95%</span><span style="left:756.49px;top:193.38px;font-size:10px;line-height:10px;font-weight:normal;color:#000;">86%</span><span style="left:7.22px;top:207.68px;font-size:10px;line-height:10px;font-weight:normal;color:#111;">4</span><span style="left:34.92px;top:208.38px;font-size:10px;line-height:10px;font-weight:normal;color:#000;">Jan-23</span><span style="left:69.30px;top:208.38px;font-size:10px;line-height:10px;font-weight:normal;color:#000;">Chicaco</span><span style="left:142.98px;top:208.38px;font-size:10px;line-height:10px;font-weight:normal;color:#000;">1,500</span><span style="left:203.75px;top:208.38px;font-size:10px;line-height:10px;font-weight:normal;color:#000;">3293</span><span style="left:270.98px;top:208.38px;font-size:10px;line-height:10px;font-weight:normal;color:#000;">2,857</span><span style="left:354.38px;top:208.38px;font-size:10px;line-height:10px;font-weight:normal;color:#000;">15</span><span style="left:372.00px;top:208.38px;font-size:10px;line-height:10px;font-weight:normal;color:#000;">Quarter 1</span><span style="left:510.49px;top:208.38px;font-size:10px;line-height:10px;font-weight:normal;color:#000;">82%</span><span style="left:623.49px;top:208.38px;font-size:10px;line-height:10px;font-weight:normal;color:#000;">80%</span><span style="left:756.49px;top:208.38px;font-size:10px;line-height:10px;font-weight:normal;color:#000;">76%</span><span style="left:7.22px;top:221.68px;font-size:10px;line-height:10px;font-weight:normal;color:#111;">5</span><span style="left:34.92px;top:222.38px;font-size:10px;line-height:10px;font-weight:normal;color:#000;">Jan-23</span><span style="left:69.30px;top:222.38px;font-size:10px;line-height:10px;font-weight:normal;color:#000;">Chile</span><span style="left:142.98px;top:222.38px;font-size:10px;line-height:10px;font-weight:normal;color:#000;">1,500</span><span style="left:203.75px;top:222.38px;font-size:10px;line-height:10px;font-weight:normal;color:#000;">2019</span><span style="left:270.98px;top:222.38px;font-size:10px;line-height:10px;font-weight:normal;color:#000;">2,857</span><span style="left:354.38px;top:222.38px;font-size:10px;line-height:10px;font-weight:normal;color:#000;">40</span><span style="left:372.00px;top:222.38px;font-size:10px;line-height:10px;font-weight:normal;color:#000;">Quarter 1</span><span style="left:510.49px;top:222.38px;font-size:10px;line-height:10px;font-weight:normal;color:#000;">79%</span><span style="left:623.49px;top:222.38px;font-size:10px;line-height:10px;font-weight:normal;color:#000;">79%</span><span style="left:756.49px;top:222.38px;font-size:10px;line-height:10px;font-weight:normal;color:#000;">79%</span><span style="left:7.22px;top:235.68px;font-size:10px;line-height:10px;font-weight:normal;color:#111;">6</span><span style="left:34.92px;top:236.38px;font-size:10px;line-height:10px;font-weight:normal;color:#000;">Jan-23</span><span style="left:69.30px;top:236.38px;font-size:10px;line-height:10px;font-weight:normal;color:#000;">Columbia</span><span style="left:142.98px;top:236.38px;font-size:10px;line-height:10px;font-weight:normal;color:#000;">6,000</span><span style="left:203.75px;top:236.38px;font-size:10px;line-height:10px;font-weight:normal;color:#000;">2980</span><span style="left:270.98px;top:236.38px;font-size:10px;line-height:10px;font-weight:normal;color:#000;">2,857</span><span style="left:348.82px;top:236.38px;font-size:10px;line-height:10px;font-weight:normal;color:#000;">100</span><span style="left:372.00px;top:236.38px;font-size:10px;line-height:10px;font-weight:normal;color:#000;">Quarter 1</span><span style="left:510.49px;top:236.38px;font-size:10px;line-height:10px;font-weight:normal;color:#000;">96%</span><span style="left:623.49px;top:236.38px;font-size:10px;line-height:10px;font-weight:normal;color:#000;">79%</span><span style="left:756.49px;top:236.38px;font-size:10px;line-height:10px;font-weight:normal;color:#000;">70%</span><span style="left:7.22px;top:250.68px;font-size:10px;line-height:10px;font-weight:normal;color:#111;">7</span><span style="left:34.92px;top:251.38px;font-size:10px;line-height:10px;font-weight:normal;color:#000;">Jan-23</span><span style="left:69.30px;top:251.38px;font-size:10px;line-height:10px;font-weight:normal;color:#000;">Los Angeles</span><span style="left:142.98px;top:251.38px;font-size:10px;line-height:10px;font-weight:normal;color:#000;">2,500</span><span style="left:203.75px;top:251.38px;font-size:10px;line-height:10px;font-weight:normal;color:#000;">2209</span><span style="left:270.98px;top:251.38px;font-size:10px;line-height:10px;font-weight:normal;color:#000;">2,857</span><span style="left:354.38px;top:251.38px;font-size:10px;line-height:10px;font-weight:normal;color:#000;">15</span><span style="left:372.00px;top:251.38px;font-size:10px;line-height:10px;font-weight:normal;color:#000;">Quarter 1</span><span style="left:510.49px;top:251.38px;font-size:10px;line-height:10px;font-weight:normal;color:#000;">79%</span><span style="left:623.49px;top:251.38px;font-size:10px;line-height:10px;font-weight:normal;color:#000;">79%</span><span style="left:756.49px;top:251.38px;font-size:10px;line-height:10px;font-weight:normal;color:#000;">77%</span><span style="left:7.22px;top:265.68px;font-size:10px;line-height:10px;font-weight:normal;color:#111;">8</span><span style="left:34.92px;top:266.38px;font-size:10px;line-height:10px;font-weight:normal;color:#000;">Jan-23</span><span style="left:69.30px;top:266.38px;font-size:10px;line-height:10px;font-weight:normal;color:#000;">Peru</span><span style="left:137.41px;top:266.38px;font-size:10px;line-height:10px;font-weight:normal;color:#000;">10,000</span><span style="left:203.75px;top:266.38px;font-size:10px;line-height:10px;font-weight:normal;color:#000;">2440</span><span style="left:270.98px;top:266.38px;font-size:10px;line-height:10px;font-weight:normal;color:#000;">2,857</span><span style="left:354.38px;top:266.38px;font-size:10px;line-height:10px;font-weight:normal;color:#000;">20</span><span style="left:372.00px;top:266.38px;font-size:10px;line-height:10px;font-weight:normal;color:#000;">Quarter 1</span><span style="left:510.49px;top:266.38px;font-size:10px;line-height:10px;font-weight:normal;color:#000;">75%</span><span style="left:623.49px;top:266.38px;font-size:10px;line-height:10px;font-weight:normal;color:#000;">72%</span><span style="left:756.49px;top:266.38px;font-size:10px;line-height:10px;font-weight:normal;color:#000;">93%</span><span style="left:7.22px;top:279.68px;font-size:10px;line-height:10px;font-weight:normal;color:#111;">9</span><span style="left:33.82px;top:280.38px;font-size:10px;line-height:10px;font-weight:normal;color:#000;">Feb-23</span><span style="left:69.30px;top:280.38px;font-size:10px;line-height:10px;font-weight:normal;color:#000;">Argentina</span><span style="left:142.98px;top:280.38px;font-size:10px;line-height:10px;font-weight:normal;color:#000;">5,000</span><span style="left:197.98px;top:280.38px;font-size:10px;line-height:10px;font-weight:normal;color:#000;">2,000</span><span style="left:270.98px;top:280.38px;font-size:10px;line-height:10px;font-weight:normal;color:#000;">1,429</span><span style="left:354.38px;top:280.38px;font-size:10px;line-height:10px;font-weight:normal;color:#000;">90</span><span style="left:372.00px;top:280.38px;font-size:10px;line-height:10px;font-weight:normal;color:#000;">Quarter 1</span><span style="left:510.49px;top:280.38px;font-size:10px;line-height:10px;font-weight:normal;color:#000;">92%</span><span style="left:623.49px;top:280.38px;font-size:10px;line-height:10px;font-weight:normal;color:#000;">99%</span><span style="left:756.49px;top:280.38px;font-size:10px;line-height:10px;font-weight:normal;color:#000;">74%</span><span style="left:4.44px;top:293.68px;font-size:10px;line-height:10px;font-weight:normal;color:#111;">10</span><span style="left:33.82px;top:294.38px;font-size:10px;line-height:10px;font-weight:normal;color:#000;">Feb-23</span><span style="left:69.30px;top:294.38px;font-size:10px;line-height:10px;font-weight:normal;color:#000;">Brazil</span><span style="left:137.41px;top:294.38px;font-size:10px;line-height:10px;font-weight:normal;color:#000;">15,000</span><span style="left:192.41px;top:294.38px;font-size:10px;line-height:10px;font-weight:normal;color:#000;">14,431</span><span style="left:270.98px;top:294.38px;font-size:10px;line-height:10px;font-weight:normal;color:#000;">1,429</span><span style="left:354.38px;top:294.38px;font-size:10px;line-height:10px;font-weight:normal;color:#000;">30</span><span style="left:372.00px;top:294.38px;font-size:10px;line-height:10px;font-weight:normal;color:#000;">Quarter 1</span><span style="left:510.49px;top:294.38px;font-size:10px;line-height:10px;font-weight:normal;color:#000;">70%</span><span style="left:623.49px;top:294.38px;font-size:10px;line-height:10px;font-weight:normal;color:#000;">99%</span><span style="left:756.49px;top:294.38px;font-size:10px;line-height:10px;font-weight:normal;color:#000;">95%</span><span style="left:4.81px;top:308.68px;font-size:10px;line-height:10px;font-weight:normal;color:#111;">11</span><span style="left:33.82px;top:309.38px;font-size:10px;line-height:10px;font-weight:normal;color:#000;">Feb-23</span><span style="left:69.30px;top:309.38px;font-size:10px;line-height:10px;font-weight:normal;color:#000;">Chicaco</span><span style="left:142.98px;top:309.38px;font-size:10px;line-height:10px;font-weight:normal;color:#000;">1,500</span><span style="left:203.75px;top:309.38px;font-size:10px;line-height:10px;font-weight:normal;color:#000;">3000</span><span style="left:270.98px;top:309.38px;font-size:10px;line-height:10px;font-weight:normal;color:#000;">1,429</span><span style="left:354.38px;top:309.38px;font-size:10px;line-height:10px;font-weight:normal;color:#000;">15</span><span style="left:372.00px;top:309.38px;font-size:10px;line-height:10px;font-weight:normal;color:#000;">Quarter 1</span><span style="left:510.49px;top:309.38px;font-size:10px;line-height:10px;font-weight:normal;color:#000;">91%</span><span style="left:623.49px;top:309.38px;font-size:10px;line-height:10px;font-weight:normal;color:#000;">98%</span><span style="left:756.49px;top:309.38px;font-size:10px;line-height:10px;font-weight:normal;color:#000;">89%</span><span style="left:4.44px;top:323.68px;font-size:10px;line-height:10px;font-weight:normal;color:#111;">12</span><span style="left:33.82px;top:324.38px;font-size:10px;line-height:10px;font-weight:normal;color:#000;">Feb-23</span><span style="left:69.30px;top:324.38px;font-size:10px;line-height:10px;font-weight:normal;color:#000;">Chile</span><span style="left:142.98px;top:324.38px;font-size:10px;line-height:10px;font-weight:normal;color:#000;">3,500</span><span style="left:203.75px;top:324.38px;font-size:10px;line-height:10px;font-weight:normal;color:#000;">4000</span><span style="left:270.98px;top:324.38px;font-size:10px;line-height:10px;font-weight:normal;color:#000;">1,429</span><span style="left:354.38px;top:324.38px;font-size:10px;line-height:10px;font-weight:normal;color:#000;">40</span><span style="left:372.00px;top:324.38px;font-size:10px;line-height:10px;font-weight:normal;color:#000;">Quarter 1</span><span style="left:510.49px;top:324.38px;font-size:10px;line-height:10px;font-weight:normal;color:#000;">74%</span><span style="left:623.49px;top:324.38px;font-size:10px;line-height:10px;font-weight:normal;color:#000;">85%</span><span style="left:756.49px;top:324.38px;font-size:10px;line-height:10px;font-weight:normal;color:#000;">70%</span><span style="left:4.44px;top:337.68px;font-size:10px;line-height:10px;font-weight:normal;color:#111;">13</span><span style="left:33.82px;top:338.38px;font-size:10px;line-height:10px;font-weight:normal;color:#000;">Feb-23</span><span style="left:69.30px;top:338.38px;font-size:10px;line-height:10px;font-weight:normal;color:#000;">Columbia</span><span style="left:142.98px;top:338.38px;font-size:10px;line-height:10px;font-weight:normal;color:#000;">6,000</span><span style="left:203.75px;top:338.38px;font-size:10px;line-height:10px;font-weight:normal;color:#000;">2000</span><span style="left:270.98px;top:338.38px;font-size:10px;line-height:10px;font-weight:normal;color:#000;">1,429</span><span style="left:348.82px;top:338.38px;font-size:10px;line-height:10px;font-weight:normal;color:#000;">100</span><span style="left:372.00px;top:338.38px;font-size:10px;line-height:10px;font-weight:normal;color:#000;">Quarter 1</span><span style="left:510.49px;top:338.38px;font-size:10px;line-height:10px;font-weight:normal;color:#000;">90%</span><span style="left:623.49px;top:338.38px;font-size:10px;line-height:10px;font-weight:normal;color:#000;">90%</span><span style="left:756.49px;top:338.38px;font-size:10px;line-height:10px;font-weight:normal;color:#000;">72%</span><span style="left:4.44px;top:351.68px;font-size:10px;line-height:10px;font-weight:normal;color:#111;">14</span><span style="left:33.82px;top:352.38px;font-size:10px;line-height:10px;font-weight:normal;color:#000;">Feb-23</span><span style="left:69.30px;top:352.38px;font-size:10px;line-height:10px;font-weight:normal;color:#000;">Los Angeles</span><span style="left:142.98px;top:352.38px;font-size:10px;line-height:10px;font-weight:normal;color:#000;">4,000</span><span style="left:203.75px;top:352.38px;font-size:10px;line-height:10px;font-weight:normal;color:#000;">2000</span><span style="left:270.98px;top:352.38px;font-size:10px;line-height:10px;font-weight:normal;color:#000;">1,429</span><span style="left:354.38px;top:352.38px;font-size:10px;line-height:10px;font-weight:normal;color:#000;">15</span><span style="left:372.00px;top:352.38px;font-size:10px;line-height:10px;font-weight:normal;color:#000;">Quarter 1</span><span style="left:510.49px;top:352.38px;font-size:10px;line-height:10px;font-weight:normal;color:#000;">95%</span><span style="left:623.49px;top:352.38px;font-size:10px;line-height:10px;font-weight:normal;color:#000;">97%</span><span style="left:756.49px;top:352.38px;font-size:10px;line-height:10px;font-weight:normal;color:#000;">81%</span><span style="left:4.44px;top:366.68px;font-size:10px;line-height:10px;font-weight:normal;color:#111;">15</span><span style="left:33.82px;top:367.38px;font-size:10px;line-height:10px;font-weight:normal;color:#000;">Feb-23</span><span style="left:69.30px;top:367.38px;font-size:10px;line-height:10px;font-weight:normal;color:#000;">Peru</span><span style="left:137.41px;top:367.38px;font-size:10px;line-height:10px;font-weight:normal;color:#000;">10,000</span><span style="left:203.75px;top:367.38px;font-size:10px;line-height:10px;font-weight:normal;color:#000;">2000</span><span style="left:270.98px;top:367.38px;font-size:10px;line-height:10px;font-weight:normal;color:#000;">1,429</span><span style="left:354.38px;top:367.38px;font-size:10px;line-height:10px;font-weight:normal;color:#000;">20</span><span style="left:372.00px;top:367.38px;font-size:10px;line-height:10px;font-weight:normal;color:#000;">Quarter 1</span><span style="left:510.49px;top:367.38px;font-size:10px;line-height:10px;font-weight:normal;color:#000;">99%</span><span style="left:623.49px;top:367.38px;font-size:10px;line-height:10px;font-weight:normal;color:#000;">79%</span><span style="left:756.49px;top:367.38px;font-size:10px;line-height:10px;font-weight:normal;color:#000;">75%</span><span style="left:4.44px;top:381.68px;font-size:10px;line-height:10px;font-weight:normal;color:#111;">16</span><span style="left:33.83px;top:382.38px;font-size:10px;line-height:10px;font-weight:normal;color:#000;">Mar-23</span><span style="left:69.30px;top:382.38px;font-size:10px;line-height:10px;font-weight:normal;color:#000;">Argentina</span><span style="left:142.98px;top:382.38px;font-size:10px;line-height:10px;font-weight:normal;color:#000;">8,571</span><span style="left:197.98px;top:382.38px;font-size:10px;line-height:10px;font-weight:normal;color:#000;">4,000</span><span style="left:270.98px;top:382.38px;font-size:10px;line-height:10px;font-weight:normal;color:#000;">1,429</span><span style="left:354.38px;top:382.38px;font-size:10px;line-height:10px;font-weight:normal;color:#000;">45</span><span style="left:372.00px;top:382.38px;font-size:10px;line-height:10px;font-weight:normal;color:#000;">Quarter 1</span><span style="left:510.49px;top:382.38px;font-size:10px;line-height:10px;font-weight:normal;color:#000;">86%</span><span style="left:623.49px;top:382.38px;font-size:10px;line-height:10px;font-weight:normal;color:#000;">97%</span><span style="left:756.49px;top:382.38px;font-size:10px;line-height:10px;font-weight:normal;color:#000;">89%</span><span style="left:4.44px;top:395.68px;font-size:10px;line-height:10px;font-weight:normal;color:#111;">17</span><span style="left:33.83px;top:396.38px;font-size:10px;line-height:10px;font-weight:normal;color:#000;">Mar-23</span><span style="left:69.30px;top:396.38px;font-size:10px;line-height:10px;font-weight:normal;color:#000;">Brazil</span><span style="left:142.98px;top:396.38px;font-size:10px;line-height:10px;font-weight:normal;color:#000;">8,571</span><span style="left:197.98px;top:396.38px;font-size:10px;line-height:10px;font-weight:normal;color:#000;">6,000</span><span style="left:270.98px;top:396.38px;font-size:10px;line-height:10px;font-weight:normal;color:#000;">1,429</span><span style="left:354.38px;top:396.38px;font-size:10px;line-height:10px;font-weight:normal;color:#000;">43</span><span style="left:372.00px;top:396.38px;font-size:10px;line-height:10px;font-weight:normal;color:#000;">Quarter 1</span><span style="left:510.49px;top:396.38px;font-size:10px;line-height:10px;font-weight:normal;color:#000;">83%</span><span style="left:623.49px;top:396.38px;font-size:10px;line-height:10px;font-weight:normal;color:#000;">72%</span><span style="left:756.49px;top:396.38px;font-size:10px;line-height:10px;font-weight:normal;color:#000;">74%</span><span style="left:4.44px;top:409.68px;font-size:10px;line-height:10px;font-weight:normal;color:#111;">18</span><span style="left:33.83px;top:410.38px;font-size:10px;line-height:10px;font-weight:normal;color:#000;">Mar-23</span><span style="left:69.30px;top:410.38px;font-size:10px;line-height:10px;font-weight:normal;color:#000;">Chicaco</span><span style="left:142.98px;top:410.38px;font-size:10px;line-height:10px;font-weight:normal;color:#000;">8,571</span><span style="left:203.75px;top:410.38px;font-size:10px;line-height:10px;font-weight:normal;color:#000;">6500</span><span style="left:270.98px;top:410.38px;font-size:10px;line-height:10px;font-weight:normal;color:#000;">1,429</span><span style="left:354.38px;top:410.38px;font-size:10px;line-height:10px;font-weight:normal;color:#000;">43</span><span style="left:372.00px;top:410.38px;font-size:10px;line-height:10px;font-weight:normal;color:#000;">Quarter 1</span><span style="left:510.49px;top:410.38px;font-size:10px;line-height:10px;font-weight:normal;color:#000;">74%</span><span style="left:623.49px;top:410.38px;font-size:10px;line-height:10px;font-weight:normal;color:#000;">78%</span><span style="left:756.49px;top:410.38px;font-size:10px;line-height:10px;font-weight:normal;color:#000;">94%</span>
</body></html>
